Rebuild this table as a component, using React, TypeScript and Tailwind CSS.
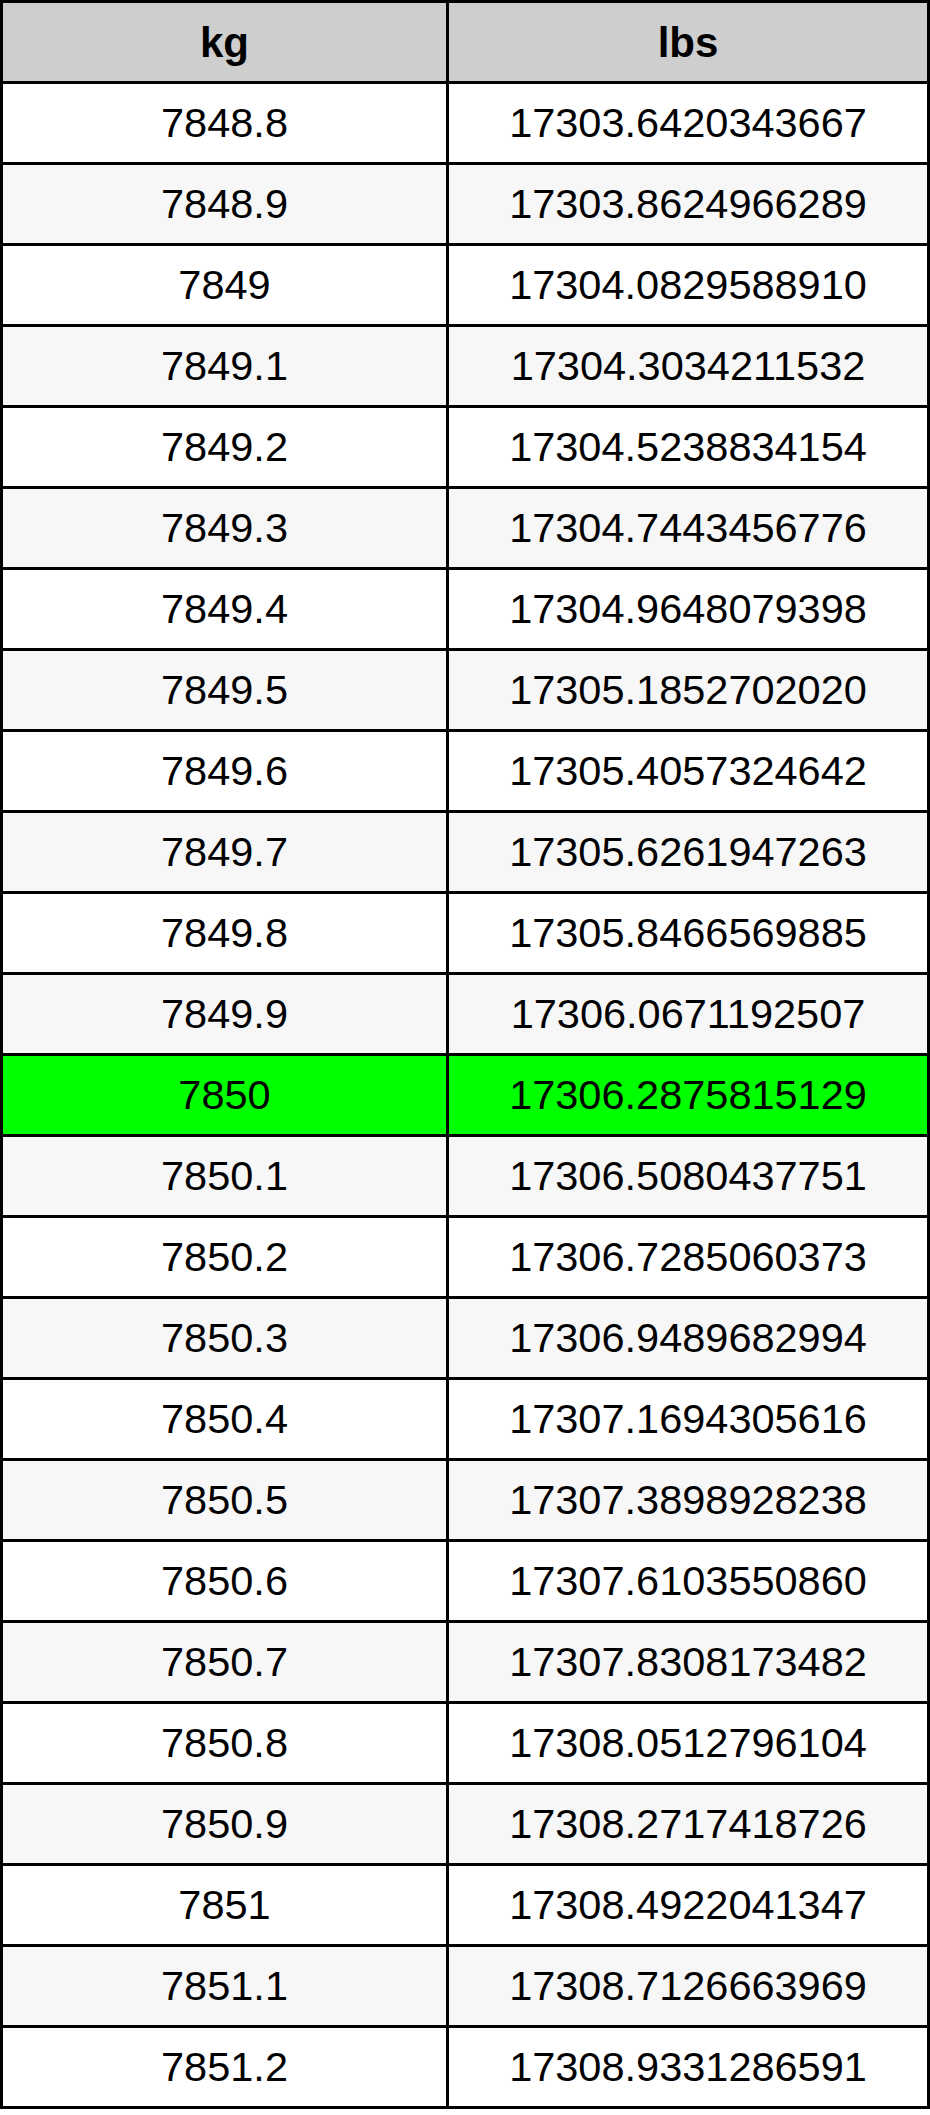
const rows: [string, string][] = [
  ["7848.8", "17303.6420343667"],
  ["7848.9", "17303.8624966289"],
  ["7849", "17304.0829588910"],
  ["7849.1", "17304.3034211532"],
  ["7849.2", "17304.5238834154"],
  ["7849.3", "17304.7443456776"],
  ["7849.4", "17304.9648079398"],
  ["7849.5", "17305.1852702020"],
  ["7849.6", "17305.4057324642"],
  ["7849.7", "17305.6261947263"],
  ["7849.8", "17305.8466569885"],
  ["7849.9", "17306.0671192507"],
  ["7850", "17306.2875815129"],
  ["7850.1", "17306.5080437751"],
  ["7850.2", "17306.7285060373"],
  ["7850.3", "17306.9489682994"],
  ["7850.4", "17307.1694305616"],
  ["7850.5", "17307.3898928238"],
  ["7850.6", "17307.6103550860"],
  ["7850.7", "17307.8308173482"],
  ["7850.8", "17308.0512796104"],
  ["7850.9", "17308.2717418726"],
  ["7851", "17308.4922041347"],
  ["7851.1", "17308.7126663969"],
  ["7851.2", "17308.9331286591"],
]

export default function App() {
  return (
    <div className="w-[930px] bg-white font-['Liberation_Sans',Arial,sans-serif] text-black">
      <div className="grid grid-cols-[443px_478px] gap-[3px] bg-black p-[3px]">
        <div className="flex h-[78px] items-center justify-center bg-[#cecece] text-[42px] font-bold">kg</div>
        <div className="flex h-[78px] items-center justify-center bg-[#cecece] text-[42px] font-bold">lbs</div>
        {rows.map(([kg, lbs], i) => {
          // the exact value row is highlighted, the rest alternate
          const bg = kg === "7850" ? "bg-[#00ff00]" : i % 2 === 0 ? "bg-white" : "bg-[#f7f7f7]"
          return [
            <div key={kg + "-kg"} className={`flex h-[78px] items-center justify-center text-[41.5px] ${bg}`}>
              {kg}
            </div>,
            <div key={kg + "-lbs"} className={`flex h-[78px] items-center justify-center text-[41.5px] ${bg}`}>
              {lbs}
            </div>,
          ]
        })}
      </div>
    </div>
  )
}
